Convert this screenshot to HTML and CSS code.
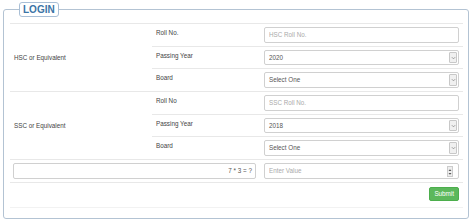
FILE: index.html
```html
<!DOCTYPE html>
<html lang="en">
<head>
    <meta charset="UTF-8">
    <title>Login</title>
    <link rel="stylesheet" href="styles.css">
</head>
<body>
    <fieldset class="login-box">
        <legend class="login-title">LOGIN</legend>

        <table class="login-table">
            <colgroup>
                <col class="col-group">
                <col class="col-label">
                <col class="col-field">
            </colgroup>

            <!-- HSC -->
            <tr>
                <td rowspan="3" class="group-name">HSC or Equivalent</td>
                <td class="field-name">Roll No.</td>
                <td class="field"><input class="text-input" type="text" placeholder="HSC Roll No."></td>
            </tr>
            <tr>
                <td class="field-name">Passing Year</td>
                <td class="field">
                    <div class="select-box">2020<span class="select-btn"><svg viewBox="0 0 6 4" width="5" height="4"><path d="M1 1 L3 3 L5 1" fill="none" stroke="#777" stroke-width="0.8"/></svg></span></div>
                </td>
            </tr>
            <tr>
                <td class="field-name">Board</td>
                <td class="field">
                    <div class="select-box">Select One<span class="select-btn"><svg viewBox="0 0 6 4" width="5" height="4"><path d="M1 1 L3 3 L5 1" fill="none" stroke="#777" stroke-width="0.8"/></svg></span></div>
                </td>
            </tr>

            <!-- SSC -->
            <tr>
                <td rowspan="3" class="group-name">SSC or Equivalent</td>
                <td class="field-name">Roll No</td>
                <td class="field"><input class="text-input" type="text" placeholder="SSC Roll No."></td>
            </tr>
            <tr>
                <td class="field-name">Passing Year</td>
                <td class="field">
                    <div class="select-box">2018<span class="select-btn"><svg viewBox="0 0 6 4" width="5" height="4"><path d="M1 1 L3 3 L5 1" fill="none" stroke="#777" stroke-width="0.8"/></svg></span></div>
                </td>
            </tr>
            <tr>
                <td class="field-name">Board</td>
                <td class="field">
                    <div class="select-box">Select One<span class="select-btn"><svg viewBox="0 0 6 4" width="5" height="4"><path d="M1 1 L3 3 L5 1" fill="none" stroke="#777" stroke-width="0.8"/></svg></span></div>
                </td>
            </tr>

            <!-- Captcha -->
            <tr>
                <td colspan="2" class="captcha-cell">
                    <div class="captcha">7 * 3 = ?</div>
                </td>
                <td class="field">
                    <div class="number-box">
                        <input class="text-input" type="text" placeholder="Enter Value">
                        <span class="spinner">
                            <svg viewBox="0 0 4 8" width="4" height="8"><path d="M0.5 3 L2 1.2 L3.5 3 Z M0.5 5 L2 6.8 L3.5 5 Z" fill="#555"/></svg>
                        </span>
                    </div>
                </td>
            </tr>

            <tr>
                <td colspan="3" class="submit-cell"><button class="submit-btn">Submit</button></td>
            </tr>
        </table>
    </fieldset>
</body>
</html>
```

FILE: styles.css
```css
body {
    margin: 0;
    background-color: #fff;
    font-family: 'Liberation Sans', Arial, sans-serif;
    font-size: 6.3px;
    color: #444;
}

.login-box {
    margin: 2px 5px 0 3px;
    padding: 6px 5px 10px 6px;
    border: 1px solid #b3c3d3;
    border-radius: 3px;
}

.login-title {
    margin-left: 9px;
    padding: 0 3px;
    border: 1px solid #a9bfd6;
    border-radius: 3px;
    font-size: 10px;
    line-height: 13px;
    font-weight: bold;
    color: #3b74a6;
}

.login-table {
    width: 100%;
    table-layout: fixed;
    border-collapse: collapse;
}

.col-group {
    width: 142px;
}

.col-label {
    width: 108px;
}

.login-table td {
    border-top: 1px solid #e8e8e8;
    padding: 3px 4px;
    vertical-align: top;
}

.group-name {
    vertical-align: middle !important;
    padding-left: 4px;
}

.field-name {
    padding-top: 5px !important;
}

.text-input,
.select-box {
    display: block;
    box-sizing: border-box;
    width: 100%;
    height: 15.7px;
    margin: 0;
    padding: 0 4px;
    border: 1px solid #d0d0d0;
    border-radius: 2px;
    background: #fff;
    font-family: inherit;
    font-size: 6.3px;
    color: #555;
    outline: none;
}

.text-input::placeholder {
    color: #aaa;
}

.select-box {
    position: relative;
    line-height: 13.7px;
}

.select-btn {
    position: absolute;
    top: 1px;
    right: 1px;
    bottom: 1px;
    width: 6px;
    border: 1px solid #c8c8c8;
    border-radius: 1px;
    background: #f0f0f0;
    display: flex;
    align-items: center;
    justify-content: center;
}

.number-box {
    position: relative;
}

.spinner {
    position: absolute;
    top: 3px;
    right: 6px;
    width: 4px;
    height: 9px;
    border: 1px solid #ccc;
    background: #eee;
    display: flex;
    align-items: center;
    justify-content: center;
}

.captcha-cell {
    padding-left: 3px !important;
}

.captcha {
    box-sizing: border-box;
    height: 15.7px;
    padding: 0 3px;
    border: 1px solid #d0d0d0;
    border-radius: 2px;
    text-align: right;
    line-height: 13.7px;
    color: #555;
    font-size: 6.3px;
}

.submit-cell {
    text-align: right;
    padding: 4px 4px 6px !important;
    border-bottom: 1px solid #f2f2f2;
}

.submit-btn {
    height: 14px;
    padding: 0 4px;
    border: 1px solid #4cae4c;
    border-radius: 2px;
    background-color: #5cb85c;
    color: #fff;
    font-family: inherit;
    font-size: 6.3px;
    vertical-align: top;
}
```
